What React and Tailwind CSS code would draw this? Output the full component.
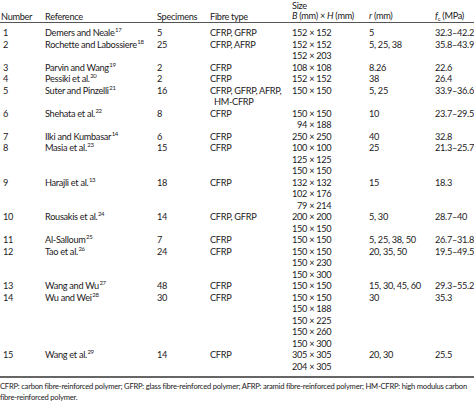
import React from "react";

const rows = [
    { no: "1", ref: "Demers and Neale", sup: "17", spec: "5", fibre: ["CFRP, GFRP"], sizes: ["152 × 152"], r: "5", fc: "32.3–42.2" },
    { no: "2", ref: "Rochette and Labossiere", sup: "18", spec: "25", fibre: ["CFRP, AFRP"], sizes: ["152 × 152", "152 × 203"], r: "5, 25, 38", fc: "35.8–43.9" },
    { no: "3", ref: "Parvin and Wang", sup: "19", spec: "2", fibre: ["CFRP"], sizes: ["108 × 108"], r: "8.26", fc: "22.6" },
    { no: "4", ref: "Pessiki et al.", sup: "20", spec: "2", fibre: ["CFRP"], sizes: ["152 × 152"], r: "38", fc: "26.4" },
    { no: "5", ref: "Suter and Pinzelli", sup: "21", spec: "16", fibre: ["CFRP, GFRP, AFRP,", "HM-CFRP"], sizes: ["150 × 150"], r: "5, 25", fc: "33.9–36.6" },
    { no: "6", ref: "Shehata et al.", sup: "22", spec: "8", fibre: ["CFRP"], sizes: ["150 × 150", "94 × 188"], r: "10", fc: "23.7–29.5" },
    { no: "7", ref: "Ilki and Kumbasar", sup: "14", spec: "6", fibre: ["CFRP"], sizes: ["250 × 250"], r: "40", fc: "32.8" },
    { no: "8", ref: "Masia et al.", sup: "23", spec: "15", fibre: ["CFRP"], sizes: ["100 × 100", "125 × 125", "150 × 150"], r: "25", fc: "21.3–25.7" },
    { no: "9", ref: "Harajli et al.", sup: "13", spec: "18", fibre: ["CFRP"], sizes: ["132 × 132", "102 × 176", "79 × 214"], r: "15", fc: "18.3" },
    { no: "10", ref: "Rousakis et al.", sup: "24", spec: "14", fibre: ["CFRP, GFRP"], sizes: ["200 × 200", "150 × 150"], r: "5, 30", fc: "28.7–40" },
    { no: "11", ref: "Al-Salloum", sup: "25", spec: "7", fibre: ["CFRP"], sizes: ["150 × 150"], r: "5, 25, 38, 50", fc: "26.7–31.8" },
    { no: "12", ref: "Tao et al.", sup: "26", spec: "24", fibre: ["CFRP"], sizes: ["150 × 150", "150 × 230", "150 × 300"], r: "20, 35, 50", fc: "19.5–49.5" },
    { no: "13", ref: "Wang and Wu", sup: "27", spec: "48", fibre: ["CFRP"], sizes: ["150 × 150"], r: "15, 30, 45, 60", fc: "29.3–55.2" },
    { no: "14", ref: "Wu and Wei", sup: "28", spec: "30", fibre: ["CFRP"], sizes: ["150 × 150", "150 × 188", "150 × 225", "150 × 260", "150 × 300"], r: "30", fc: "35.3" },
    { no: "15", ref: "Wang et al.", sup: "29", spec: "14", fibre: ["CFRP"], sizes: ["305 × 305", "204 × 305"], r: "20, 30", fc: "25.5" },
];

const cols = "grid grid-cols-[45px_112px_53px_82px_77px_66px_1fr]";

const App = () => {
    return (
        <div
            className="w-[474px] h-[402px] overflow-hidden bg-white text-[#1c1a1b] text-[9.2px] tracking-[-0.3px]"
            style={{ fontFamily: "Lato, 'Liberation Sans', sans-serif" }}
        >
            {/* header */}
            <div className={`${cols} items-end h-[22px] leading-[11px] whitespace-nowrap`}>
                <div className="pl-[1px]">Number</div>
                <div>Reference</div>
                <div>Specimens</div>
                <div>Fibre type</div>
                <div>
                    <div className="leading-[9px]">Size</div>
                    <div className="pb-[1px]">
                        <i>B</i> (mm) × <i>H</i> (mm)
                    </div>
                </div>
                <div className="pb-[1px]"><i>r</i> (mm)</div>
                <div className="pb-[1px]">
                    <i>f</i><sub className="text-[6px]">c</sub> (MPa)
                </div>
            </div>
            <div className="h-px bg-[#555]" />

            {/* body */}
            <div className="py-[4px] leading-[11.5px] whitespace-nowrap">
                {rows.map((row) => (
                    <div key={row.no} className={cols}>
                        <div className="pl-[3px]">{row.no}</div>
                        <div>
                            {row.ref}
                            <sup className="text-[6px] -top-[4px] ml-[0.5px]">{row.sup}</sup>
                        </div>
                        <div>{row.spec}</div>
                        <div>
                            {row.fibre.map((f, i) => (
                                <div key={i} className={i > 0 ? "pl-[4px]" : ""}>{f}</div>
                            ))}
                        </div>
                        <div>
                            <div className="w-fit flex flex-col items-end">
                                {row.sizes.map((s, i) => (
                                    <div key={i}>{s}</div>
                                ))}
                            </div>
                        </div>
                        <div>{row.r}</div>
                        <div className="overflow-hidden">{row.fc}</div>
                    </div>
                ))}
            </div>
            <div className="h-[1.5px] bg-[#666]" />

            {/* footnote */}
            <div className="pt-[3px] text-[7.6px] leading-[11px] tracking-[-0.22px] whitespace-nowrap overflow-hidden">
                <div>
                    CFRP: carbon fibre-reinforced polymer; GFRP: glass fibre-reinforced polymer; AFRP: aramid fibre-reinforced polymer; HM-CFRP: high modulus carbon
                </div>
                <div>fibre-reinforced polymer.</div>
            </div>
        </div>
    );
};

export default App;
